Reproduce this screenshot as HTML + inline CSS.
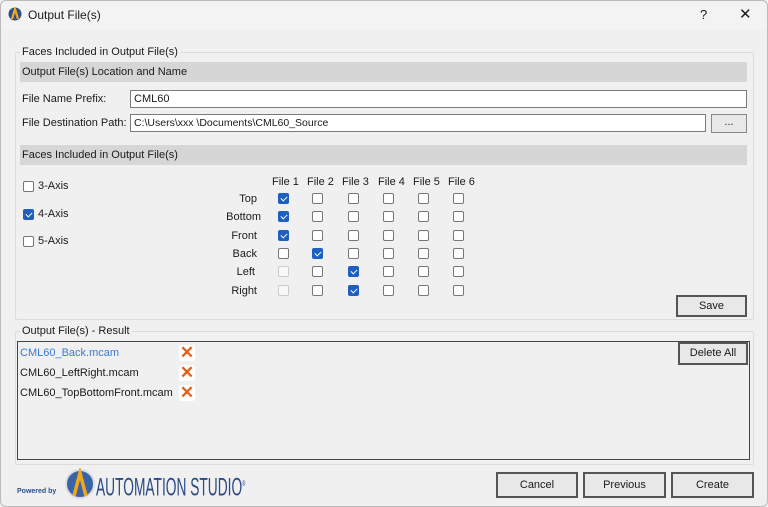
<!DOCTYPE html>
<html><head><style>
body{margin:0;width:768px;height:507px;overflow:hidden;background:#f0f0f0;font-family:"Liberation Sans",sans-serif;font-size:11px;color:#1a1a1a;position:relative}
.a{position:absolute}
.bar{position:absolute;left:20px;width:727px;height:20px;background:#d6d6d6;line-height:20px;padding-left:2px;box-sizing:border-box}
.inp{position:absolute;background:#fff;border:1px solid #7a7a7a;box-sizing:border-box;height:18px;line-height:16px;padding-left:3px}
.btn{position:absolute;border:2px solid #555;background:#e8e8e8;box-sizing:border-box;text-align:center}
.cb{position:absolute;width:11px;height:11px;border:1px solid #777;border-radius:2px;background:#fff;box-sizing:border-box}
.cb.on{background:#1f5fbf;border-color:#1f5fbf}
.cb.on::after{content:"";position:absolute;left:3px;top:1px;width:3px;height:5px;border:solid #fff;border-width:0 1px 1px 0;transform:rotate(45deg)}
.cb.dis{border-color:#ccc;background:#f8f8f8}
.gb{position:absolute;border:1px solid #dcdcdc;border-radius:2px}
.lbl{position:absolute;text-align:right;width:60px}
.x{position:absolute;width:16px;height:16px;color:#e0601a;font-weight:bold;font-size:17px;line-height:16px;text-align:center;background:#fff;border-radius:3px}
</style></head><body>
<div class="a" style="left:0;top:0;width:766px;height:505px;border:1px solid #bbb;border-radius:6px"></div>
<div class="a" style="left:1px;top:1px;width:766px;height:29px;background:#f3f3f3;border-radius:6px 6px 0 0"></div>
<svg class="a" style="left:8px;top:7px" width="14" height="14"><circle cx="7" cy="7" r="6.5" fill="#2a4e8a"/><path d="M4 12 L7 2 L10 12" stroke="#f2a81d" stroke-width="2.2" fill="none"/></svg>
<div class="a" style="left:28px;top:8px;font-size:12px">Output File(s)</div>
<div class="a" style="left:700px;top:7px;font-size:13px">?</div>
<div class="a" style="left:739px;top:5px;font-size:15px">✕</div>
<div class="gb" style="left:15px;top:52px;width:737px;height:266px"></div>
<div class="a" style="left:20px;top:46px;background:#f0f0f0;padding:0 2px">Faces Included in Output File(s)</div>
<div class="bar" style="top:62px">Output File(s) Location and Name</div>
<div class="a" style="left:22px;top:93px">File Name Prefix:</div>
<div class="inp" style="left:130px;top:90px;width:617px">CML60</div>
<div class="a" style="left:22px;top:117px">File Destination Path:</div>
<div class="inp" style="left:130px;top:114px;width:576px;font-size:10.5px">C:\Users\xxx \Documents\CML60_Source</div>
<div class="btn" style="left:711px;top:114px;width:36px;height:19px;border:1px solid #888;line-height:14px">...</div>
<div class="bar" style="top:145px">Faces Included in Output File(s)</div>
<div class="cb" style="left:23px;top:181px"></div><div class="a" style="left:38px;top:180px">3-Axis</div>
<div class="cb on" style="left:23px;top:209px"></div><div class="a" style="left:38px;top:208px">4-Axis</div>
<div class="cb" style="left:23px;top:236px"></div><div class="a" style="left:38px;top:235px">5-Axis</div>
<div class="a" style="left:272px;top:176px">File 1</div>
<div class="a" style="left:307px;top:176px">File 2</div>
<div class="a" style="left:342px;top:176px">File 3</div>
<div class="a" style="left:378px;top:176px">File 4</div>
<div class="a" style="left:413px;top:176px">File 5</div>
<div class="a" style="left:448px;top:176px">File 6</div>
<div class="lbl" style="left:197px;top:193px">Top</div>
<div class="lbl" style="left:201px;top:211px">Bottom</div>
<div class="lbl" style="left:197px;top:230px">Front</div>
<div class="lbl" style="left:197px;top:248px">Back</div>
<div class="lbl" style="left:195px;top:266px">Left</div>
<div class="lbl" style="left:197px;top:285px">Right</div>
<div id="grid"></div>
<div class="btn" style="left:676px;top:295px;width:71px;height:22px;line-height:18px">Save</div>
<div class="gb" style="left:15px;top:331px;width:737px;height:132px"></div>
<div class="a" style="left:20px;top:325px;background:#f0f0f0;padding:0 2px">Output File(s) - Result</div>
<div class="a" style="left:17px;top:341px;width:733px;height:119px;border:1px solid #444;box-sizing:border-box"></div>
<div class="a" style="left:20px;top:347px;color:#3a7bd5">CML60_Back.mcam</div>
<div class="a" style="left:20px;top:367px">CML60_LeftRight.mcam</div>
<div class="a" style="left:20px;top:387px">CML60_TopBottomFront.mcam</div>
<div class="x" style="left:179px;top:345px">✕</div>
<div class="x" style="left:179px;top:365px">✕</div>
<div class="x" style="left:179px;top:385px">✕</div>
<div class="btn" style="left:678px;top:342px;width:70px;height:23px;line-height:19px">Delete All</div>
<div class="a" style="left:17px;top:488px;font-size:7px;color:#2a4e8a;font-weight:bold">Powered by</div>
<svg class="a" style="left:65px;top:468px" width="30" height="32"><circle cx="15" cy="16" r="14" fill="#3a64a8" stroke="#ddd" stroke-width="2"/><path d="M9 28 L15 5 L21 28" stroke="#f2a81d" stroke-width="3.5" fill="none"/></svg>
<div class="a" style="left:96px;top:471px;font-size:25px;line-height:26px;color:#2a4a85;transform:scaleX(0.55);transform-origin:left;white-space:nowrap">AUTOMATION STUDIO<sup style="font-size:8px">®</sup></div>
<div class="btn" style="left:496px;top:472px;width:82px;height:26px;line-height:22px">Cancel</div>
<div class="btn" style="left:583px;top:472px;width:83px;height:26px;line-height:22px">Previous</div>
<div class="btn" style="left:671px;top:472px;width:83px;height:26px;line-height:22px">Create</div>
<script>
var xs=[278,312,348,383,418,453],ys=[193,211,230,248,266,285];
var on={"0,0":1,"0,1":1,"0,2":1,"1,3":1,"2,4":1,"2,5":1},dis={"0,4":1,"0,5":1};
var h="";for(var c=0;c<6;c++)for(var r=0;r<6;r++){var k=c+","+r;h+='<div class="cb'+(on[k]?' on':'')+(dis[k]?' dis':'')+'" style="left:'+xs[c]+'px;top:'+ys[r]+'px"></div>';}
document.getElementById("grid").innerHTML=h;
</script>
</body></html>
